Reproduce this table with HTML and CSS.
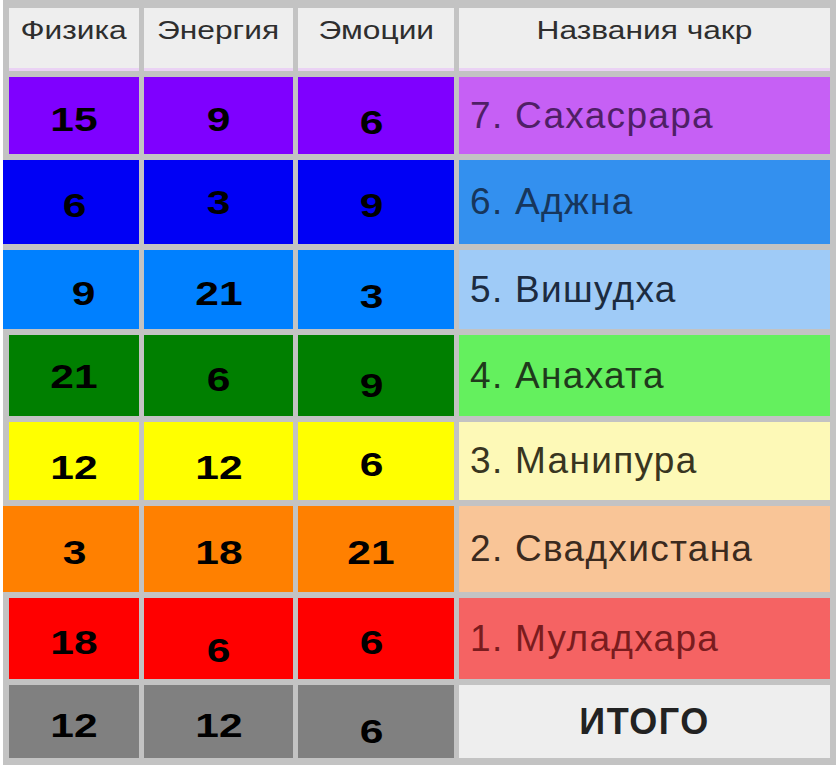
FILE: index.html
```html
<!DOCTYPE html>
<html lang="ru">
<head>
<meta charset="utf-8">
<title>Чакры</title>
<link rel="stylesheet" href="styles.css">
</head>
<body>
<div class="chart">
  <div class="hd"><span>Физика</span></div>
  <div class="hd"><span>Энергия</span></div>
  <div class="hd"><span>Эмоции</span></div>
  <div class="hd"><span>Названия чакр</span></div>

  <div class="cell c7"><span class="num">15</span></div>
  <div class="cell c7"><span class="num">9</span></div>
  <div class="cell c7 dn3"><span class="num">6</span></div>
  <div class="name n7">7. Сахасрара</div>

  <div class="cell c6 bleed"><span class="num">6</span></div>
  <div class="cell c6 up3"><span class="num">3</span></div>
  <div class="cell c6"><span class="num">9</span></div>
  <div class="name n6">6. Аджна</div>

  <div class="cell c5 bleed rt12"><span class="num">9</span></div>
  <div class="cell c5"><span class="num">21</span></div>
  <div class="cell c5 dn3"><span class="num">3</span></div>
  <div class="name n5">5. Вишудха</div>

  <div class="cell c4 up3"><span class="num">21</span></div>
  <div class="cell c4"><span class="num">6</span></div>
  <div class="cell c4 dn6"><span class="num">9</span></div>
  <div class="name n4">4. Анахата</div>

  <div class="cell c3 dn3"><span class="num">12</span></div>
  <div class="cell c3 dn3"><span class="num">12</span></div>
  <div class="cell c3"><span class="num">6</span></div>
  <div class="name n3">3. Манипура</div>

  <div class="cell c2 bleed"><span class="num">3</span></div>
  <div class="cell c2"><span class="num">18</span></div>
  <div class="cell c2"><span class="num">21</span></div>
  <div class="name n2">2. Свадхистана</div>

  <div class="cell c1"><span class="num">18</span></div>
  <div class="cell c1 dn8"><span class="num">6</span></div>
  <div class="cell c1"><span class="num">6</span></div>
  <div class="name n1">1. Муладхара</div>

  <div class="cell c0"><span class="num">12</span></div>
  <div class="cell c0"><span class="num">12</span></div>
  <div class="cell c0 dn6"><span class="num">6</span></div>
  <div class="total">ИТОГО</div>
</div>
</body>
</html>
```

FILE: styles.css
```css
html, body {
  margin: 0;
  background: #ffffff;
}

.chart {
  display: grid;
  grid-template-columns: 130px 149px 156px 371px;
  grid-template-rows: 63px 77px 84px 79px 81px 78px 86px 81px 73px;
  column-gap: 5px;
  row-gap: 6px;
  padding: 8px 6px 7px 6px;
  margin-left: 3px;
  width: max-content;
  background: #c3c3c3;
}

.hd {
  box-sizing: border-box;
  background: #eeeeee;
  border-bottom: 3px solid #ead2f4;
  display: flex;
  justify-content: center;
  padding-top: 7px;
  font-family: "Liberation Sans", Arial, sans-serif;
  font-size: 26px;
  line-height: 30px;
  color: #2e2e2e;
}

.hd span {
  display: inline-block;
  transform: scaleX(1.22);
}

.cell {
  box-sizing: border-box;
  display: flex;
  align-items: center;
  justify-content: center;
  padding-top: 6px;
  font-family: "Liberation Sans", Arial, sans-serif;
  font-weight: bold;
  font-size: 34px;
  line-height: 1;
  color: #000000;
}

.cell .num {
  display: inline-block;
  transform: scaleX(1.25);
}

.cell:nth-child(4n+3) {
  padding-right: 10px;
}

.bleed { margin-left: -6px; padding-left: 6px; }
.rt12 { padding-left: 24px; }
.up3 { padding-top: 0; }
.dn3 { padding-top: 12px; }
.dn6 { padding-top: 18px; }
.dn8 { padding-top: 22px; }

.c7 { background: #7f00ff; }
.c6 { background: #0000f5; }
.c5 { background: #0080ff; }
.c4 { background: #007f00; }
.c3 { background: #ffff00; }
.c2 { background: #ff8000; }
.c1 { background: #ff0000; }
.c0 { background: #808080; }

.name {
  display: flex;
  align-items: center;
  padding-left: 11px;
  font-family: "Liberation Sans", Arial, sans-serif;
  font-size: 37px;
  letter-spacing: 1.3px;
  color: rgba(0, 0, 0, 0.6);
}

.n7 { background: #c660f5; color: #4f1f66; }
.n6 { background: #3390ef; color: #17365c; }
.n5 { background: #9fcbf7; color: #1c2b40; }
.n4 { background: #64f05e; color: #1f3a1c; }
.n3 { background: #fdf9b7; color: #383520; }
.n2 { background: #f9c597; color: #3b2a1e; }
.n1 { background: #f56363; color: #7a1c1e; }

.total {
  display: flex;
  align-items: center;
  justify-content: center;
  background: #eeeeee;
  font-family: "Liberation Sans", Arial, sans-serif;
  font-weight: bold;
  font-size: 36px;
  letter-spacing: 1.5px;
  color: #222222;
}
```
